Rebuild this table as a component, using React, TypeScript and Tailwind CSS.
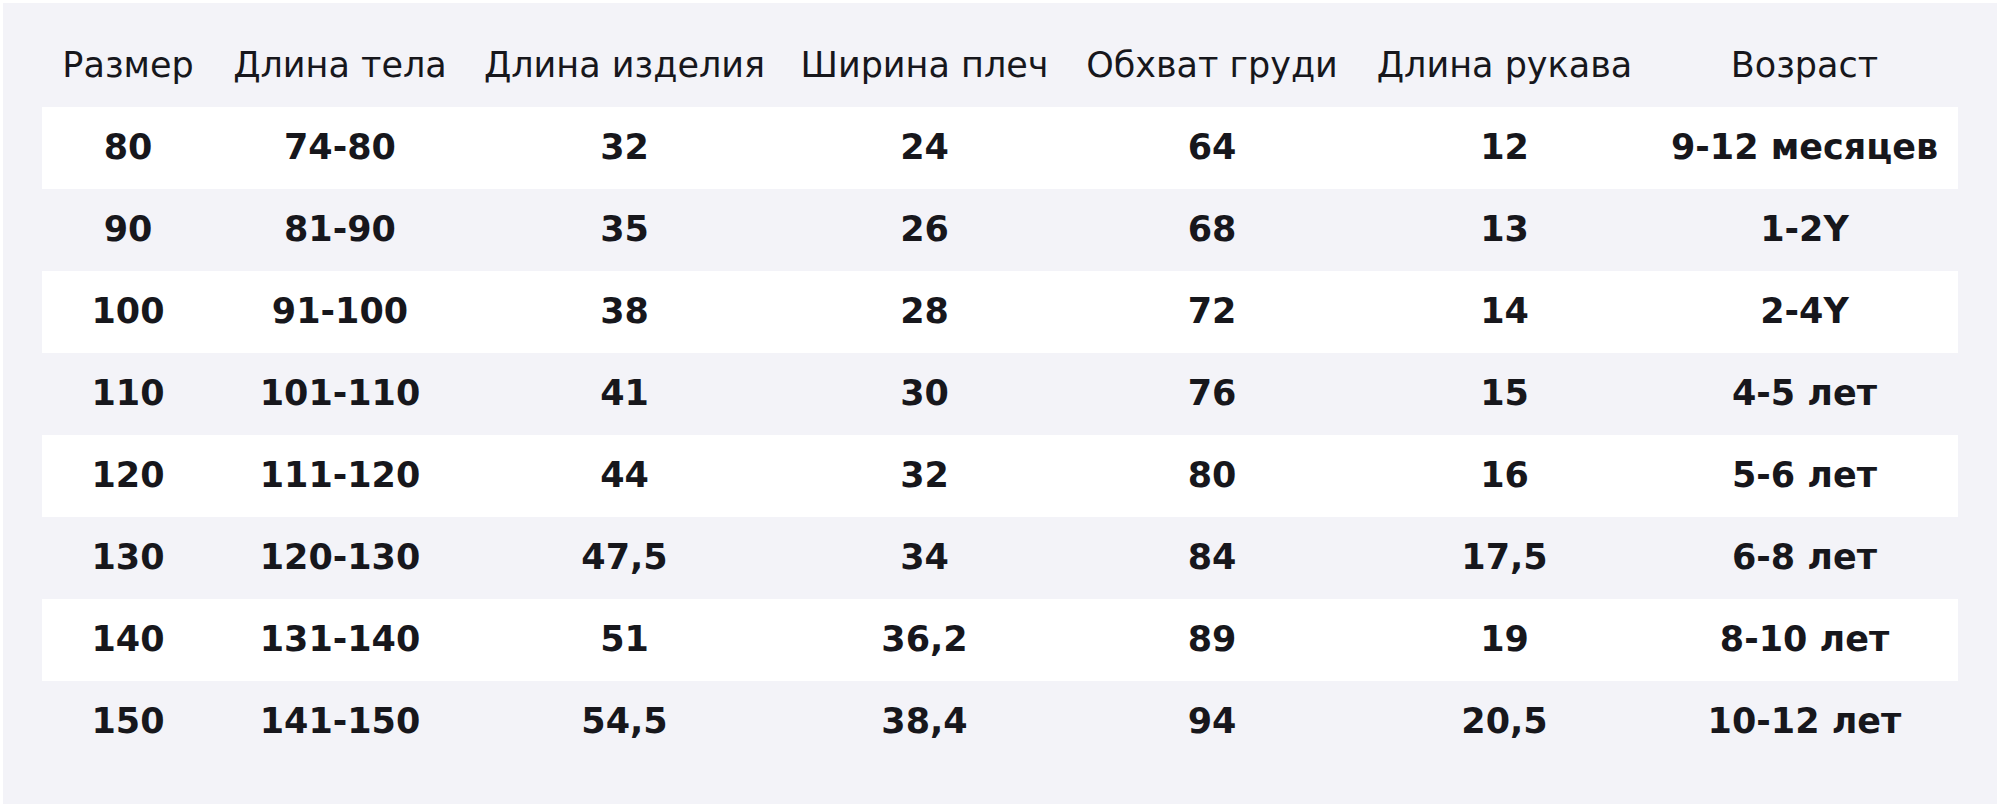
import React from 'react'

const headers = ['Размер', 'Длина тела', 'Длина изделия', 'Ширина плеч', 'Обхват груди', 'Длина рукава', 'Возраст']

const rows: string[][] = [
    ['80', '74-80', '32', '24', '64', '12', '9-12 месяцев'],
    ['90', '81-90', '35', '26', '68', '13', '1-2Y'],
    ['100', '91-100', '38', '28', '72', '14', '2-4Y'],
    ['110', '101-110', '41', '30', '76', '15', '4-5 лет'],
    ['120', '111-120', '44', '32', '80', '16', '5-6 лет'],
    ['130', '120-130', '47,5', '34', '84', '17,5', '6-8 лет'],
    ['140', '131-140', '51', '36,2', '89', '19', '8-10 лет'],
    ['150', '141-150', '54,5', '38,4', '94', '20,5', '10-12 лет'],
]

export default function App() {
    return (
        <div className="w-[2000px] h-[807px] bg-white p-[3px]" style={{ fontFamily: '"DejaVu Sans", Verdana, sans-serif' }}>
            <div className="h-full bg-[#f3f3f8] px-[39px] pt-[22px] pb-[41px]">
                <table className="table-fixed border-collapse w-[1916px] text-[#17171c] text-[35px]">
                    <colgroup>
                        <col className="w-[172px]" />
                        <col className="w-[252px]" />
                        <col className="w-[317px]" />
                        <col className="w-[283px]" />
                        <col className="w-[292px]" />
                        <col className="w-[293px]" />
                        <col className="w-[307px]" />
                    </colgroup>
                    <thead>
                        <tr className="h-[82px]">
                            {headers.map(h => (
                                <th key={h} className="font-normal text-center whitespace-nowrap p-0 pb-[2px]">{h}</th>
                            ))}
                        </tr>
                    </thead>
                    <tbody>
                        {rows.map((r, i) => (
                            <tr key={r[0]} className={i % 2 === 0 ? 'h-[82px] bg-white' : 'h-[82px]'}>
                                {r.map((c, j) => (
                                    <td key={j} className="font-bold text-center whitespace-nowrap p-0 pb-[2px]">{c}</td>
                                ))}
                            </tr>
                        ))}
                    </tbody>
                </table>
            </div>
        </div>
    )
}
